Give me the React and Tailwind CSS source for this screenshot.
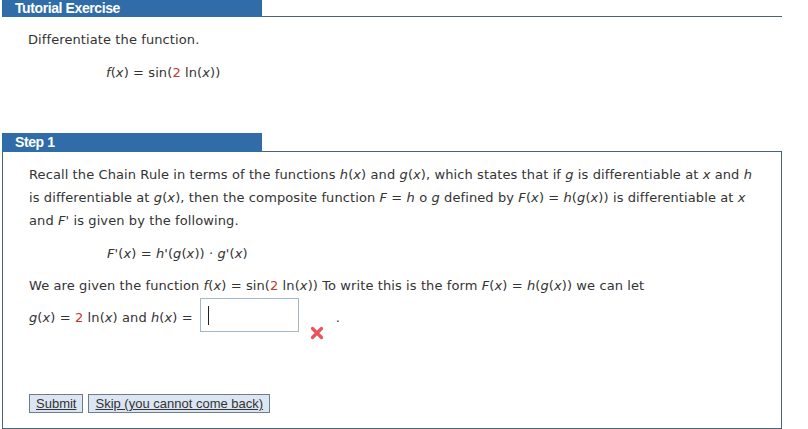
export default function App() {
  const v = { fontFamily: '"DejaVu Sans", Verdana, sans-serif' };
  const a = { fontFamily: '"Liberation Sans", Arial, sans-serif' };
  const I = ({ children }) => <i>{children}</i>;
  const R = ({ children }) => <span className="text-[#c0392b]">{children}</span>;
  return (
    <div className="w-[808px] h-[429px] bg-white text-[#333] relative overflow-hidden" style={v}>
      <div className="flex items-end ml-[2px] w-[780px]">
        <div className="w-[260px] h-[17px] bg-[#2f6ca8] text-white font-bold text-[14px] leading-[17px] pl-[13px] tracking-[-0.4px]" style={a}>
          Tutorial Exercise
        </div>
        <div className="flex-1 h-px bg-[#4c6376]" />
      </div>
      <div className="pl-[28px] pt-[15px] text-[13px] leading-[16px] tracking-[0.1px]">
        <div>Differentiate the function.</div>
        <div className="pl-[78px] pt-[17px]"><I>f</I>(<I>x</I>) = sin(<R>2</R> ln(<I>x</I>))</div>
      </div>
      <div className="ml-[2px] mt-[52px] w-[780px]">
        <div className="flex items-end">
          <div className="w-[260px] h-[19px] bg-[#2f6ca8] text-white font-bold text-[14px] leading-[19px] pl-[13px] tracking-[-0.4px]" style={a}>
            Step 1
          </div>
          <div className="flex-1 h-px bg-[#4c6376]" />
        </div>
        <div className="h-[277px] border-l border-r border-b border-[#4c6376] pl-[26px] pr-[20px] pt-[11px] text-[13px] leading-[23px] tracking-[0.1px]">
          <p>
            Recall the Chain Rule in terms of the functions <I>h</I>(<I>x</I>) and <I>g</I>(<I>x</I>), which states that if <I>g</I> is differentiable at <I>x</I> and <I>h</I> is differentiable at <I>g</I>(<I>x</I>), then the composite function <I>F</I> = <I>h</I> o <I>g</I> defined by <I>F</I>(<I>x</I>) = <I>h</I>(<I>g</I>(<I>x</I>)) is differentiable at <I>x</I> and <I>F</I>' is given by the following.
          </p>
          <p className="pl-[78px] pt-[10px]">
            <I>F</I>'(<I>x</I>) = <I>h</I>'(<I>g</I>(<I>x</I>)) · <I>g</I>'(<I>x</I>)
          </p>
          <p className="pt-[9px]">
            We are given the function <I>f</I>(<I>x</I>) = sin(<R>2</R> ln(<I>x</I>)) To write this is the form <I>F</I>(<I>x</I>) = <I>h</I>(<I>g</I>(<I>x</I>)) we can let
          </p>
          <div className="flex items-start pt-[1px]">
            <span className="pt-[8px]"><I>g</I>(<I>x</I>) = <R>2</R> ln(<I>x</I>) and <I>h</I>(<I>x</I>) =</span>
            <div className="ml-[7px] w-[99px] h-[34px] border border-[#9fb6cc] flex items-center pl-[7px]">
              <div className="w-px h-[19px] bg-[#222]" />
            </div>
            <svg className="ml-[11px] mt-[28px]" width="14" height="14" viewBox="0 0 14 14">
              <path d="M2.5 2.5 L11.5 11.5 M11.5 2.5 L2.5 11.5" stroke="#e8545a" strokeWidth="3.2" strokeLinecap="round" />
            </svg>
            <span className="ml-[12px] pt-[8px]">.</span>
          </div>
          <div className="flex gap-[5px] mt-[54px]" style={a}>
            <button className="h-[19px] px-[6px] bg-[#dce6f2] border border-[#6e7d8c] text-[13px] leading-[17px] underline text-[#333] tracking-normal">Submit</button>
            <button className="h-[19px] px-[6px] bg-[#dce6f2] border border-[#6e7d8c] text-[13px] leading-[17px] underline text-[#333] tracking-normal">Skip (you cannot come back)</button>
          </div>
        </div>
      </div>
    </div>
  );
}
